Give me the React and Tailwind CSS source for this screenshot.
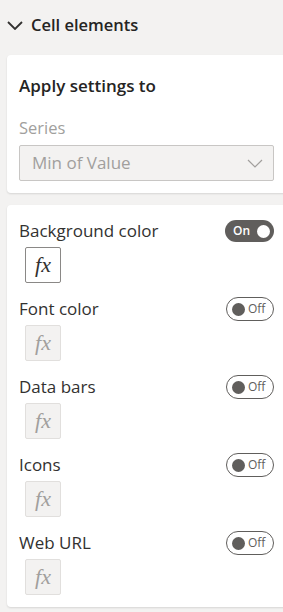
import React from "react";

const font = { fontFamily: '"Open Sans", "Noto Sans", sans-serif' };

function Toggle({ on }) {
  if (on) {
    return (
      <div className="flex h-[22px] w-[49px] items-center justify-between rounded-full bg-[#605e5c] pl-[8px] pr-[4px]">
        <span className="text-[12px] leading-none text-white font-semibold">On</span>
        <span className="h-[13px] w-[13px] rounded-full bg-white" />
      </div>
    );
  }
  return (
    <div className="flex h-[24px] w-[48px] items-center gap-[3px] rounded-full border border-[#605e5c] bg-white pl-[5px]">
      <span className="h-[13px] w-[13px] rounded-full bg-[#605e5c]" />
      <span className="text-[12px] leading-none text-[#605e5c]">Off</span>
    </div>
  );
}

function Fx({ active }) {
  return (
    <div
      className={
        "flex h-[36px] w-[36px] items-center justify-center rounded-[2px] border " +
        (active
          ? "border-[#8a8886] bg-white text-[#323130]"
          : "border-[#e1dfdd] bg-[#f3f2f1] text-[#a19f9d]")
      }
    >
      <span
        className="text-[22px] italic leading-none"
        style={{ fontFamily: '"Liberation Serif", "DejaVu Serif", serif' }}
      >
        fx
      </span>
    </div>
  );
}

function Row({ label, on }) {
  return (
    <div className="flex flex-col pb-[14px] last:pb-0">
      <div className="flex h-[24px] items-center justify-between pr-[9px]">
        <span className="text-[17px] text-[#323130]">{label}</span>
        <Toggle on={on} />
      </div>
      <div className="mt-[4px] pl-[6px]">
        <Fx active={on} />
      </div>
    </div>
  );
}

export default function App() {
  return (
    <div
      className="h-[612px] w-[283px] overflow-hidden bg-[#f3f2f1] text-[#323130]"
      style={font}
    >
      <div className="flex h-[50px] items-center pl-[7px]">
        <svg width="16" height="9" viewBox="0 0 16 9" className="mr-[8px]">
          <path d="M1 1 L8 8 L15 1" fill="none" stroke="#323130" strokeWidth="1.8" />
        </svg>
        <span className="text-[16.5px] font-semibold leading-none text-[#252423]">Cell elements</span>
      </div>

      <div className="mb-[12px] ml-[7px] mr-[-6px] mt-[5px] rounded-[4px] bg-white pl-[12px] pr-[15px] pt-[21px] pb-[12px] shadow-[0_1px_2px_rgba(0,0,0,0.12)]">
        <div className="flex h-[20px] items-center text-[17px] font-semibold text-[#252423]">Apply settings to</div>
        <div className="mt-[22px] flex h-[20px] items-center text-[16.5px] text-[#a19f9d]">Series</div>
        <div className="mt-[7px] flex h-[36px] items-center justify-between rounded-[2px] border border-[#c8c6c4] bg-[#f3f2f1] pl-[12px] pr-[10px]">
          <span className="text-[17px] text-[#a19f9d]">Min of Value</span>
          <svg width="16" height="9" viewBox="0 0 16 9">
            <path d="M1 1 L8 8 L15 1" fill="none" stroke="#a19f9d" strokeWidth="1.2" />
          </svg>
        </div>
      </div>

      <div className="ml-[7px] mr-[-6px] rounded-[4px] bg-white pl-[12px] pr-[6px] pt-[14px] pb-[12px] shadow-[0_1px_2px_rgba(0,0,0,0.12)]">
        <Row label="Background color" on />
        <Row label="Font color" />
        <Row label="Data bars" />
        <Row label="Icons" />
        <Row label="Web URL" />
      </div>
    </div>
  );
}
